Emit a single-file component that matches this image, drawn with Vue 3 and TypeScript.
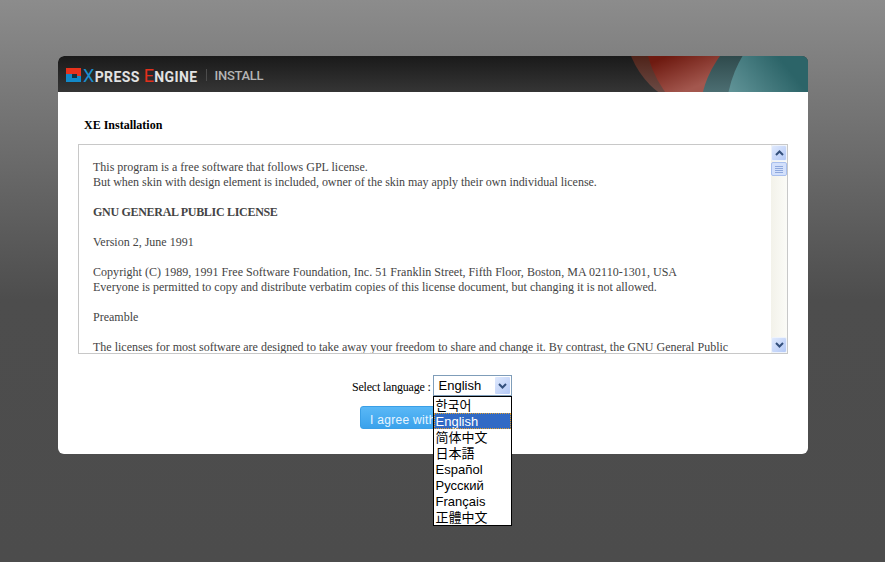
<script setup lang="ts">
const languages = ['한국어', 'English', '简体中文', '日本語', 'Español', 'Русский', 'Français', '正體中文']
</script>

<template>
  <div class="page">
    <div class="card">
      <header class="head">
        <svg class="art" width="200" height="36" viewBox="0 0 200 36">
          <defs>
            <linearGradient id="rd" gradientUnits="userSpaceOnUse" x1="60" y1="0" x2="75" y2="36"><stop offset="0" stop-color="#6e1a10" /><stop offset="1" stop-color="#a3574e" /></linearGradient>
            <linearGradient id="tl" gradientUnits="userSpaceOnUse" x1="170" y1="0" x2="125" y2="36"><stop offset="0" stop-color="#2c6468" /><stop offset="1" stop-color="#5f9296" /></linearGradient>
            <linearGradient id="to" gradientUnits="userSpaceOnUse" x1="0" y1="0" x2="0" y2="36"><stop offset="0" stop-color="#2f4a4c" /><stop offset="1" stop-color="#4c6e72" /></linearGradient>
            <linearGradient id="ro" gradientUnits="userSpaceOnUse" x1="0" y1="0" x2="0" y2="36"><stop offset="0" stop-color="#4f2319" /><stop offset="1" stop-color="#6b4a44" /></linearGradient>
          </defs>
          <circle cx="100.5" cy="-30" r="83" fill="url(#ro)" />
          <circle cx="150" cy="-30" r="114" fill="url(#rd)" />
          <circle cx="192" cy="60" r="100" fill="url(#to)" />
          <circle cx="235" cy="60" r="117" fill="url(#tl)" />
        </svg>
        <svg class="mark" width="15" height="14" viewBox="0 0 15 14">
          <path d="M0 0H15V8H11V6H0Z" fill="#e8321c" />
          <path d="M0 6H6V10H11V8H15V14H0Z" fill="#1389c8" />
          <path d="M6 6H11V10H6Z" fill="#17323f" />
        </svg>
        <div class="brand"><span class="x">X</span>PRESS <span class="e">E</span>NGINE</div>
        <div class="sep"></div>
        <div class="install">INSTALL</div>
      </header>
      <div class="body">
        <h1 class="title">XE Installation</h1>
        <div class="license">
          <div class="text">
            <p>This program is a free software that follows GPL license.<br /><span class="tight">But when skin with design element is included, owner of the skin may apply their own individual license.</span></p>
            <p><b>GNU GENERAL PUBLIC LICENSE</b></p>
            <p>Version 2, June 1991</p>
            <p><span class="wide">Copyright (C) 1989, 1991 Free Software Foundation, Inc. 51 Franklin Street, Fifth Floor, Boston, MA 02110-1301, USA</span><br />Everyone is permitted to copy and distribute verbatim copies of this license document, but changing it is not allowed.</p>
            <p>Preamble</p>
            <p>The licenses for most software are designed to take away your freedom to share and change it. By contrast, the GNU General Public</p>
          </div>
          <div class="bar">
            <div class="sbtn"><svg width="9" height="6" viewBox="0 0 9 6"><path d="M1 5L4.5 1.5L8 5" fill="none" stroke="#34507c" stroke-width="2" /></svg></div>
            <div class="thumb"><i></i><i></i><i></i><i></i></div>
            <div class="track"></div>
            <div class="sbtn"><svg width="9" height="6" viewBox="0 0 9 6"><path d="M1 1L4.5 4.5L8 1" fill="none" stroke="#34507c" stroke-width="2" /></svg></div>
          </div>
        </div>
        <div class="lang">
          <span class="label">Select language :</span>
          <div class="select">
            <span class="value">English</span>
            <span class="arrow"><svg width="9" height="6" viewBox="0 0 9 6"><path d="M1 1L4.5 4.5L8 1" fill="none" stroke="#34507c" stroke-width="2" /></svg></span>
            <ul class="menu">
              <li v-for="l in languages" :key="l" :class="{ on: l === 'English' }">{{ l }}</li>
            </ul>
          </div>
        </div>
        <div class="actions"><button class="agree" type="button">I agree with license</button></div>
      </div>
    </div>
  </div>
</template>

<style scoped>
.page {
  height: 562px;
  box-sizing: border-box;
  padding: 56px 0 0 58px;
  overflow: hidden;
  background: linear-gradient(#8c8c8c 0, #4d4d4d 300px, #4c4c4c 562px);
}
.card {
  width: 750px;
  height: 398px;
  background: #fff;
  border-radius: 6px;
}
.head {
  position: relative;
  overflow: hidden;
  height: 36px;
  border-radius: 6px 6px 0 0;
  display: flex;
  align-items: center;
  padding: 2px 0 0 8px;
  box-sizing: border-box;
  background: linear-gradient(#1a1a1a, #353535);
}
.art { position: absolute; right: 0; top: 0; }
.mark { flex: none; margin-top: -1px; }
.brand {
  margin-left: 2px;
  font: 700 14px Roboto, "Liberation Sans", sans-serif;
  letter-spacing: 0.4px;
  color: #e2e2e2;
  white-space: nowrap;
}
.x, .e { font-size: 18px; font-weight: 400; }
.x { color: #1b8fd0; }
.e { color: #e2301c; }
.sep { width: 1px; height: 12px; margin-left: 8px; background: #4c4c4c; }
.install {
  margin-left: 8px;
  font: 500 13px Roboto, "Liberation Sans", sans-serif;
  letter-spacing: -0.3px;
  color: #b4b4b4;
}
.body { padding: 0 20px; }
.title {
  margin: 0;
  padding: 26px 0 0 6px;
  height: 26px;
  font: 700 12px/14px "Liberation Serif", serif;
  color: #000;
}
.license {
  display: flex;
  height: 210px;
  box-sizing: border-box;
  border: 1px solid #c8c8c8;
  overflow: hidden;
}
.text {
  flex: 1;
  min-width: 0;
  padding: 15px 14px 0;
  overflow: hidden;
  font: 12px/15px "Liberation Serif", serif;
  color: #444;
}
.text p { margin: 0 0 15px; white-space: nowrap; }
.text b { letter-spacing: -0.3px; }
.tight { letter-spacing: -0.03px; }
.wide { letter-spacing: 0.035px; }
.bar {
  flex: none;
  width: 16px;
  display: flex;
  flex-direction: column;
  background: linear-gradient(90deg, #f3f2ea, #fbfbf7);
}
.sbtn {
  height: 16px;
  display: flex;
  align-items: center;
  justify-content: center;
  box-sizing: border-box;
  border: 1px solid #eef3fc;
  border-radius: 2px;
  background: linear-gradient(135deg, #dfe9fd, #b4c9f6);
}
.thumb {
  height: 14px;
  margin-top: 1px;
  display: flex;
  flex-direction: column;
  align-items: center;
  justify-content: center;
  gap: 1px;
  box-sizing: border-box;
  border: 1px solid #a8bfee;
  border-radius: 2px;
  background: #d3e0fb;
}
.thumb i { display: block; width: 8px; height: 1px; background: #8ea8dd; }
.track { flex: 1; }
.lang {
  display: flex;
  align-items: flex-end;
  margin-top: 21px;
  height: 21px;
  gap: 2px;
  padding-left: 274px;
}
.label {
  font: 12px/15px "Liberation Serif", serif;
  letter-spacing: -0.2px;
  color: #000;
  padding-bottom: 1px;
}
.select {
  position: relative;
  z-index: 2;
  width: 79px;
  height: 21px;
  box-sizing: border-box;
  border: 1px solid #7f9db9;
  background: #fff;
  display: flex;
  align-items: center;
  padding-left: 5px;
  font: 13px "Liberation Sans", sans-serif;
  color: #000;
}
.value { flex: 1; }
.arrow {
  width: 15px;
  height: 17px;
  margin-right: 1px;
  display: flex;
  align-items: center;
  justify-content: center;
  border-radius: 1px;
  background: linear-gradient(135deg, #dfe9fd, #b4c9f6);
}
.menu {
  position: absolute;
  left: -1px;
  top: 20px;
  width: 79px;
  box-sizing: border-box;
  margin: 0;
  padding: 0;
  list-style: none;
  background: #fff;
  border: 1px solid #000;
  font: 13px/16px "Liberation Sans", "Noto Sans CJK KR", sans-serif;
  color: #000;
}
.menu li { height: 16px; box-sizing: border-box; padding: 1px 0 0 2px; line-height: 16px; white-space: nowrap; }
.menu li.on { background: #316ac5; color: #fff; outline: 1px dotted #e0a030; outline-offset: -1px; }
.actions { display: flex; justify-content: center; margin-top: 10px; }
.agree {
  width: 146px;
  height: 23px;
  padding: 4px 0 0 9px;
  text-align: left;
  border: 1px solid #3a9fe6;
  border-radius: 3px;
  background: linear-gradient(#5ab8f6, #3aa2ec);
  color: #e8f5ff;
  font: 12px "Liberation Sans", sans-serif;
  letter-spacing: 0.3px;
}
</style>
